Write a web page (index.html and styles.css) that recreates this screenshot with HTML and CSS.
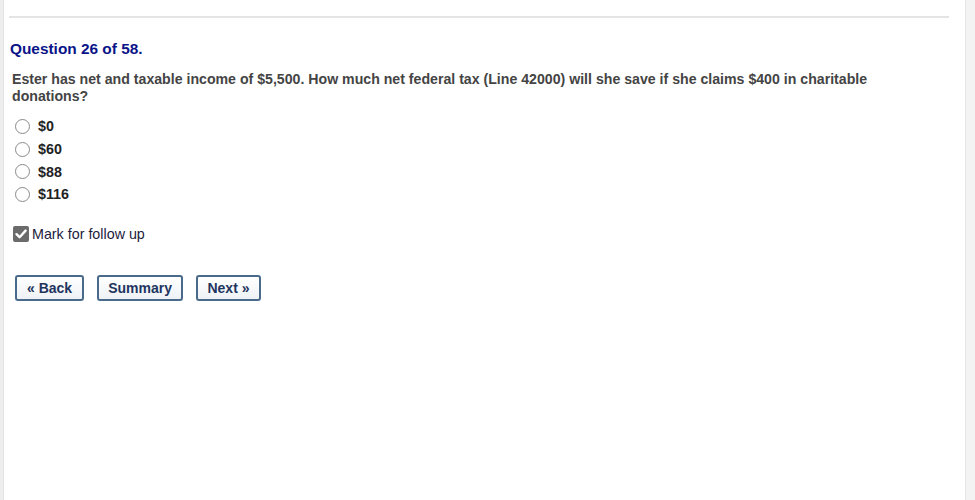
FILE: index.html
```html
<!DOCTYPE html>
<html>
<head>
<meta charset="utf-8">
<link rel="stylesheet" href="styles.css">
</head>
<body>
<div class="frame">
  <div class="side-left"></div>
  <main class="content">
    <hr class="rule">
    <h1 class="qtitle">Question 26 of 58.</h1>
    <p class="qtext">Ester has net and taxable income of $5,500. How much net federal tax (Line 42000) will she save if she claims $400 in charitable donations?</p>
    <ul class="options">
      <li class="opt"><span class="radio"></span><span class="opt-label">$0</span></li>
      <li class="opt"><span class="radio"></span><span class="opt-label">$60</span></li>
      <li class="opt"><span class="radio"></span><span class="opt-label">$88</span></li>
      <li class="opt"><span class="radio"></span><span class="opt-label">$116</span></li>
    </ul>
    <div class="follow">
      <span class="checkbox"><svg viewBox="0 0 16 16" width="16" height="16"><path d="M3.5 8.2 L6.6 11.2 L12.6 4.6" fill="none" stroke="#fff" stroke-width="2.4" stroke-linecap="round" stroke-linejoin="round"/></svg></span>
      <span class="follow-label">Mark for follow up</span>
    </div>
    <div class="buttons">
      <button class="btn btn-back">« Back</button>
      <button class="btn btn-summary">Summary</button>
      <button class="btn btn-next">Next »</button>
    </div>
  </main>
  <div class="side-right"></div>
</div>
</body>
</html>
```
FILE: styles.css
```css
html, body {
  margin: 0;
  padding: 0;
  background: #ffffff;
  height: 100%;
}
body {
  font-family: "Liberation Sans", Arial, sans-serif;
}
.frame {
  display: flex;
  height: 500px;
  overflow: hidden;
}
.side-left {
  width: 3px;
  background: #eeeeee;
  border-right: 1px solid #e2e2e2;
  flex: none;
}
.side-right {
  width: 9px;
  background: #f3f3f3;
  border-left: 1px solid #e4e4e4;
  flex: none;
}
.content {
  flex: 1;
  padding: 0 16px 0 5px;
}
.rule {
  margin: 16px 0 0 0;
  border: 0;
  height: 2px;
  background: #e4e4e4;
}
.qtitle {
  margin: 22px 0 0 1px;
  font-size: 15.4px;
  font-weight: bold;
  color: #0a1488;
  line-height: 18px;
}
.qtext {
  margin: 13px 0 0 3px;
  font-size: 14.15px;
  font-weight: bold;
  color: #444444;
  line-height: 17px;
  max-width: 900px;
}
.options {
  list-style: none;
  margin: 10px 0 0 0;
  padding: 0;
}
.opt {
  display: flex;
  align-items: center;
  height: 22.7px;
}
.radio {
  width: 13px;
  height: 13px;
  border: 1px solid #8a8a8a;
  border-radius: 50%;
  background: #fff;
  margin: 0 8px 0 6px;
  flex: none;
}
.opt-label {
  font-size: 14.3px;
  font-weight: bold;
  color: #222222;
}
.follow {
  display: flex;
  align-items: center;
  margin-top: 20px;
}
.checkbox {
  width: 16px;
  height: 16px;
  border-radius: 2px;
  background: #6b6b6b;
  margin: 0 3px 0 4px;
  display: flex;
  flex: none;
}
.follow-label {
  font-size: 14.3px;
  color: #1c1c40;
}
.buttons {
  display: flex;
  gap: 13px;
  margin-top: 33px;
  padding-left: 6px;
}
.btn {
  font-family: "Liberation Sans", Arial, sans-serif;
  font-size: 14px;
  font-weight: bold;
  color: #1f3560;
  height: 26px;
  padding: 0 10px;
  border: 2px solid #4a6a8c;
  border-radius: 3px;
  background: linear-gradient(#ffffff, #eef2f6);
}
.btn-summary {
  padding: 0 9px;
}
.btn-next {
  padding: 0 9.5px;
}
```
